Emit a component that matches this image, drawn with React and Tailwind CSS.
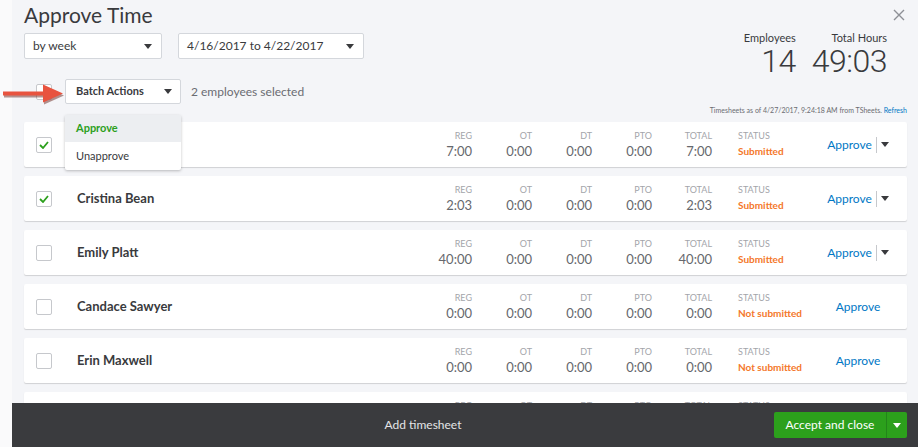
import React from "react";

const rows = [
  { name: "Alan Baker", reg: "7:00", total: "7:00", status: "Submitted", checked: true, caret: true },
  { name: "Cristina Bean", reg: "2:03", total: "2:03", status: "Submitted", checked: true, caret: true },
  { name: "Emily Platt", reg: "40:00", total: "40:00", status: "Submitted", checked: false, caret: true },
  { name: "Candace Sawyer", reg: "0:00", total: "0:00", status: "Not submitted", checked: false, caret: false },
  { name: "Erin Maxwell", reg: "0:00", total: "0:00", status: "Not submitted", checked: false, caret: false },
  { name: "Jon Smith", reg: "0:00", total: "0:00", status: "Not submitted", checked: false, caret: false },
];

// 작은 삼각형 캐럿
const Caret = ({ className = "" }) => (
  <svg width="8" height="5" viewBox="0 0 8 5" className={className}>
    <polygon points="0,0 8,0 4,5" fill="currentColor" />
  </svg>
);

const Checkbox = ({ checked }) => (
  <div className="w-[16px] h-[16px] shrink-0 bg-white border border-[#c6c8cc] rounded-[2px] flex items-center justify-center">
    {checked && (
      <svg width="10" height="8" viewBox="0 0 10 8">
        <polyline points="1,4 4,7 9,1" fill="none" stroke="#2ca01c" strokeWidth="1.8" />
      </svg>
    )}
  </div>
);

const Cell = ({ label, value }) => (
  <div className="w-[60px] shrink-0 text-right">
    <div className="text-[9px] leading-[13px] text-[#a3a5aa] uppercase">{label}</div>
    <div className="text-[13px] leading-[18px] text-[#66686d]">{value}</div>
  </div>
);

export default function App() {
  return (
    <div
      className="h-[447px] w-[918px] bg-white flex overflow-hidden"
      style={{ fontFamily: "Lato, 'Open Sans', sans-serif" }}
    >
      <div className="w-[12px] shrink-0 bg-[#fafafb]" />
      <div className="flex-1 flex flex-col bg-[#f4f5f8] relative">
        {/* ===== 본문 ===== */}
        <div className="flex-1 overflow-hidden pl-[12px] pr-[11px] relative">
          {/* 헤더 */}
          <div className="flex justify-between items-start">
            <div className="flex flex-col">
              <h1 className="text-[21px] leading-[28px] mt-[1px] text-[#393a3d]">Approve Time</h1>
              <div className="flex gap-[16px] mt-[4px]">
                <div className="w-[138px] h-[26px] bg-white border border-[#d4d7dc] rounded-[2px] flex items-center justify-between pl-[8px] pr-[9px] text-[12px] text-[#393a3d]">
                  <span>by week</span>
                  <Caret className="text-[#393a3d]" />
                </div>
                <div className="w-[186px] h-[26px] bg-white border border-[#d4d7dc] rounded-[2px] flex items-center justify-between pl-[8px] pr-[9px] text-[12px] text-[#393a3d]">
                  <span>4/16/2017 to 4/22/2017</span>
                  <Caret className="text-[#393a3d]" />
                </div>
              </div>
              <div className="flex items-center mt-[20px]">
                <div className="ml-[12px]">
                  <Checkbox checked={false} />
                </div>
                <div className="ml-[13px] w-[116px] h-[25px] bg-white border border-[#d4d7dc] rounded-[2px] flex items-center justify-between pl-[10px] pr-[8px] text-[11px] font-bold text-[#393a3d]">
                  <span>Batch Actions</span>
                  <Caret className="text-[#393a3d]" />
                </div>
                <span className="ml-[10px] text-[12px] text-[#6b6c72]">2 employees selected</span>
              </div>
            </div>

            <div className="flex flex-col items-end">
              <svg width="12" height="12" viewBox="0 0 12 12" className="mt-[9px] mr-[2px]">
                <path d="M1 1 L11 11 M11 1 L1 11" stroke="#8d9096" strokeWidth="1.4" />
              </svg>
              <div className="flex gap-[16px] mr-[20px] mt-[10px]">
                <div className="flex flex-col items-end">
                  <span className="text-[11px] leading-[14px] text-[#393a3d]">Employees</span>
                  <span className="text-[32px] leading-[32px] font-light tracking-[-0.5px] text-[#393a3d]" style={{ fontFamily: "Roboto, sans-serif" }}>14</span>
                </div>
                <div className="flex flex-col items-end">
                  <span className="text-[11px] leading-[14px] text-[#393a3d]">Total Hours</span>
                  <span className="text-[32px] leading-[32px] font-light tracking-[-0.5px] text-[#393a3d]" style={{ fontFamily: "Roboto, sans-serif" }}>49:03</span>
                </div>
              </div>
              <div className="mt-[28px] text-[7px] leading-[10px] text-[#6b6c72]">
                Timesheets as of 4/27/2017, 9:24:18 AM from TSheets. <span className="text-[#0077c5]">Refresh</span>
              </div>
            </div>
          </div>

          {/* 직원 행 */}
          <div className="flex flex-col gap-[9px] mt-[7px]">
            {rows.map((r, i) => (
              <div
                key={i}
                className="h-[45px] shrink-0 bg-white rounded-[2px] shadow-[0_1px_1px_rgba(0,0,0,0.15)] flex items-center pl-[12px]"
              >
                <Checkbox checked={r.checked} />
                <span className="ml-[25px] flex-1 text-[13px] font-bold text-[#393a3d]">{r.name}</span>
                <div className="flex self-start pt-[7px]">
                  <Cell label="REG" value={r.reg} />
                  <Cell label="OT" value="0:00" />
                  <Cell label="DT" value="0:00" />
                  <Cell label="PTO" value="0:00" />
                  <Cell label="TOTAL" value={r.total} />
                  <div className="w-[82px] shrink-0 ml-[26px]">
                    <div className="text-[9px] leading-[13px] text-[#a3a5aa] uppercase">Status</div>
                    <div className="text-[10px] leading-[18px] font-bold text-[#f4772a]">{r.status}</div>
                  </div>
                </div>
                <div className="w-[76px] shrink-0 mr-[11px] flex items-center justify-center">
                  <span className="text-[12px] text-[#0077c5]">Approve</span>
                  {r.caret && (
                    <>
                      <span className="ml-[4px] w-px h-[16px] bg-[#c6c8cc]" />
                      <Caret className="ml-[4px] text-[#393a3d]" />
                    </>
                  )}
                </div>
              </div>
            ))}
          </div>

          {/* 일괄 작업 메뉴 */}
          <div className="absolute left-[53px] top-[115px] w-[116px] bg-white shadow-[0_1px_3px_rgba(0,0,0,0.25)] rounded-[2px] text-[11px]">
            <div className="h-[27px] flex items-center pl-[11px] bg-[#eceef1] font-bold text-[#2ca01c]">Approve</div>
            <div className="h-[28px] flex items-center pl-[11px] text-[#393a3d]">Unapprove</div>
          </div>
        </div>

        {/* 화살표 */}
        <svg width="64" height="22" viewBox="0 0 64 22" className="absolute left-[-11px] top-[84px]">
          <g transform="translate(1,1.5)">
            <path d="M2 8 L42 8 L42 1 L62 10 L42 19 L42 12 L2 12 Z" fill="#6b2a22" opacity="0.5" />
          </g>
          <path d="M2 7.5 L42 7.5 L42 0.5 L62 9.5 L42 18.5 L42 11.5 L2 11.5 Z" fill="#e8533f" />
        </svg>

        {/* ===== 하단 바 ===== */}
        <div className="h-[44px] shrink-0 bg-[#3a3b3e] flex items-center pr-[11px]">
          <div className="flex-1 pl-[60px] text-center text-[12px] text-[#e4e5e7]">Add timesheet</div>
          <div className="flex h-[26px] rounded-[2px] overflow-hidden bg-[#2ca01c]">
            <div className="w-[112px] flex items-center justify-center text-[12px] text-white">Accept and close</div>
            <div className="w-px bg-[#23851a]" />
            <div className="w-[20px] flex items-center justify-center text-white">
              <Caret />
            </div>
          </div>
        </div>
      </div>
    </div>
  );
}
